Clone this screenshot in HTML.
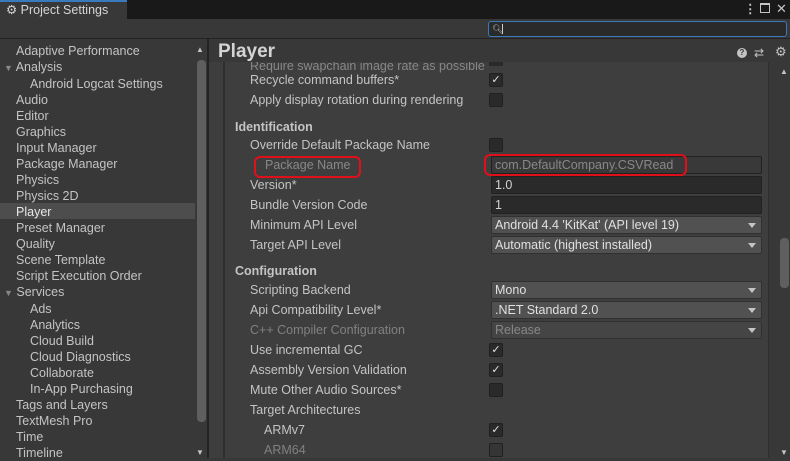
<!DOCTYPE html>
<html><head><style>
*{margin:0;padding:0;box-sizing:border-box}
body{width:790px;height:458px;overflow:hidden;background:#383838;font-family:"Liberation Sans",sans-serif;font-size:12.5px;color:#c4c4c4;position:relative}
.abs{position:absolute}
.t{position:absolute;white-space:nowrap;line-height:16px}
.cb{position:absolute;left:489px;width:14px;height:14px;background:#2a2a2a;border:1px solid #202020;border-radius:2px;color:#e0e0e0;font-size:11px;line-height:12px;text-align:center}
.fld{position:absolute;left:491px;width:271px;height:18px;background:#2a2a2a;border:1px solid #212121;border-radius:2px;padding-left:3px;line-height:16px;color:#d2d2d2}
.dd{background:#515151;border-color:#303030;color:#e0e0e0}
.dd:after{content:"";position:absolute;right:5px;top:6px;border-left:4px solid transparent;border-right:4px solid transparent;border-top:5px solid #c4c4c4}
.red{position:absolute;border:2px solid #e0101a;border-radius:6px}
</style></head><body>
<div class="abs" style="left:0;top:0;width:790px;height:19px;background:#191919"></div>
<div class="abs" style="left:0;top:0;width:127px;height:19px;background:#383838;border-top:2px solid #3a79bb"></div>
<div class="t" style="left:6px;top:2px;font-size:12.5px;color:#d6d6d6">⚙ Project Settings</div>
<div class="t" style="left:744px;top:1px;color:#c4c4c4;font-weight:bold">⋮</div>
<div class="abs" style="left:760px;top:3px;width:10px;height:10px;border:1px solid #c4c4c4;border-top-width:2px"></div>
<div class="t" style="left:776px;top:1px;font-size:13px;color:#c4c4c4">✕</div>
<div class="abs" style="left:0;top:38px;width:790px;height:1px;background:#232323"></div>
<div class="abs" style="left:488px;top:21px;width:299px;height:16px;background:#2a2a2a;border:1px solid #3a79bb;border-radius:3px"></div>
<div class="t" style="left:492px;top:21px;font-size:9px;color:#bbb">🔍︎</div>
<div class="abs" style="left:502px;top:24px;width:1px;height:10px;background:#ccc"></div>
<div class="abs" style="left:0;top:203px;width:195px;height:16px;background:#4d4d4d"></div>
<div class="abs" style="left:195px;top:39px;width:13px;height:419px;background:#383838"></div>
<div class="abs" style="left:197px;top:60px;width:9px;height:362px;background:#5f5f5f;border-radius:4px"></div>
<div class="t" style="left:196px;top:42px;font-size:8px">▲</div>
<div class="t" style="left:196px;top:445px;font-size:8px">▼</div>
<div class="abs" style="left:207px;top:39px;width:2px;height:419px;background:#232323"></div>
<div style="position:absolute;left:0;top:43px;line-height:16px;font-size:12.5px;color:#c4c4c4;white-space:nowrap">
<div style="padding-left:16px">Adaptive Performance</div>
<div style="padding-left:4px"><span style="font-size:9px;color:#888">▼</span> Analysis</div>
<div style="padding-left:30px">Android Logcat Settings</div>
<div style="padding-left:16px">Audio</div><div style="padding-left:16px">Editor</div><div style="padding-left:16px">Graphics</div><div style="padding-left:16px">Input Manager</div><div style="padding-left:16px">Package Manager</div><div style="padding-left:16px">Physics</div><div style="padding-left:16px">Physics 2D</div><div style="padding-left:16px;color:#e8e8e8">Player</div><div style="padding-left:16px">Preset Manager</div><div style="padding-left:16px">Quality</div><div style="padding-left:16px">Scene Template</div><div style="padding-left:16px">Script Execution Order</div>
<div style="padding-left:4px"><span style="font-size:9px;color:#888">▼</span> Services</div>
<div style="padding-left:30px">Ads</div><div style="padding-left:30px">Analytics</div><div style="padding-left:30px">Cloud Build</div><div style="padding-left:30px">Cloud Diagnostics</div><div style="padding-left:30px">Collaborate</div><div style="padding-left:30px">In-App Purchasing</div>
<div style="padding-left:16px">Tags and Layers</div><div style="padding-left:16px">TextMesh Pro</div><div style="padding-left:16px">Time</div><div style="padding-left:16px">Timeline</div>
</div>
<div class="abs" style="left:209px;top:62px;width:581px;height:396px;background:#3e3e3e"></div>
<div class="abs" style="left:223px;top:62px;width:2px;height:396px;background:#2e2e2e"></div>
<div class="abs" style="left:768px;top:62px;width:10px;height:396px;background:#383838;border-left:1px solid #2e2e2e"></div>
<div class="abs" style="left:778px;top:62px;width:12px;height:396px;background:#383838"></div>
<div class="abs" style="left:780px;top:238px;width:9px;height:50px;background:#5f5f5f;border-radius:4px"></div>
<div class="t" style="left:780px;top:64px;font-size:8px">▲</div>
<div class="t" style="left:780px;top:445px;font-size:8px">▼</div>
<div class="abs" style="left:209px;top:39px;width:581px;height:23px;background:#383838"></div>
<div class="t" style="left:218px;top:41px;font-size:19px;font-weight:bold;line-height:22px;color:#d4d4d4">Player</div>
<div class="abs" style="left:737px;top:48px;width:10px;height:10px;border-radius:50%;background:#c4c4c4;color:#383838;font-size:8px;font-weight:bold;text-align:center;line-height:10px">?</div>
<div class="t" style="left:754px;top:45px;font-size:12px">⇄</div>
<div class="t" style="left:775px;top:44px;font-size:13px">⚙</div>
<div class="t" style="left:250px;top:58px;color:#888;clip-path:inset(4px 0 0 0)">Require swapchain image rate as possible</div>
<div class="abs" style="left:489px;top:62px;width:14px;height:4px;background:#2a2a2a"></div>
<div class="t" style="left:250px;top:72px">Recycle command buffers*</div><div class="cb" style="top:73px">✓</div>
<div class="t" style="left:250px;top:92px">Apply display rotation during rendering</div><div class="cb" style="top:93px"></div>
<div class="t" style="left:235px;top:119px;font-weight:bold">Identification</div>
<div class="t" style="left:250px;top:137px">Override Default Package Name</div><div class="cb" style="top:138px"></div>
<div class="t" style="left:265px;top:157px;color:#888">Package Name</div>
<div class="fld" style="top:156px;background:#393939;color:#888">com.DefaultCompany.CSVRead</div>
<div class="red" style="left:254px;top:156px;width:107px;height:22px"></div>
<div class="red" style="left:484px;top:154px;width:203px;height:22px"></div>
<div class="t" style="left:250px;top:177px">Version*</div><div class="fld" style="top:176px">1.0</div>
<div class="t" style="left:250px;top:197px">Bundle Version Code</div><div class="fld" style="top:196px">1</div>
<div class="t" style="left:250px;top:217px">Minimum API Level</div><div class="fld dd" style="top:216px">Android 4.4 'KitKat' (API level 19)</div>
<div class="t" style="left:250px;top:237px">Target API Level</div><div class="fld dd" style="top:236px">Automatic (highest installed)</div>
<div class="t" style="left:235px;top:263px;font-weight:bold">Configuration</div>
<div class="t" style="left:250px;top:282px">Scripting Backend</div><div class="fld dd" style="top:281px">Mono</div>
<div class="t" style="left:250px;top:302px">Api Compatibility Level*</div><div class="fld dd" style="top:301px">.NET Standard 2.0</div>
<div class="t" style="left:250px;top:322px;color:#808080">C++ Compiler Configuration</div><div class="fld dd" style="top:321px;background:#454545;color:#888">Release</div>
<div class="t" style="left:250px;top:342px">Use incremental GC</div><div class="cb" style="top:343px">✓</div>
<div class="t" style="left:250px;top:362px">Assembly Version Validation</div><div class="cb" style="top:363px">✓</div>
<div class="t" style="left:250px;top:382px">Mute Other Audio Sources*</div><div class="cb" style="top:383px"></div>
<div class="t" style="left:250px;top:402px">Target Architectures</div>
<div class="t" style="left:264px;top:422px">ARMv7</div><div class="cb" style="top:423px">✓</div>
<div class="t" style="left:264px;top:442px;color:#808080">ARM64</div><div class="cb" style="top:443px;background:#353535"></div>
</body></html>
